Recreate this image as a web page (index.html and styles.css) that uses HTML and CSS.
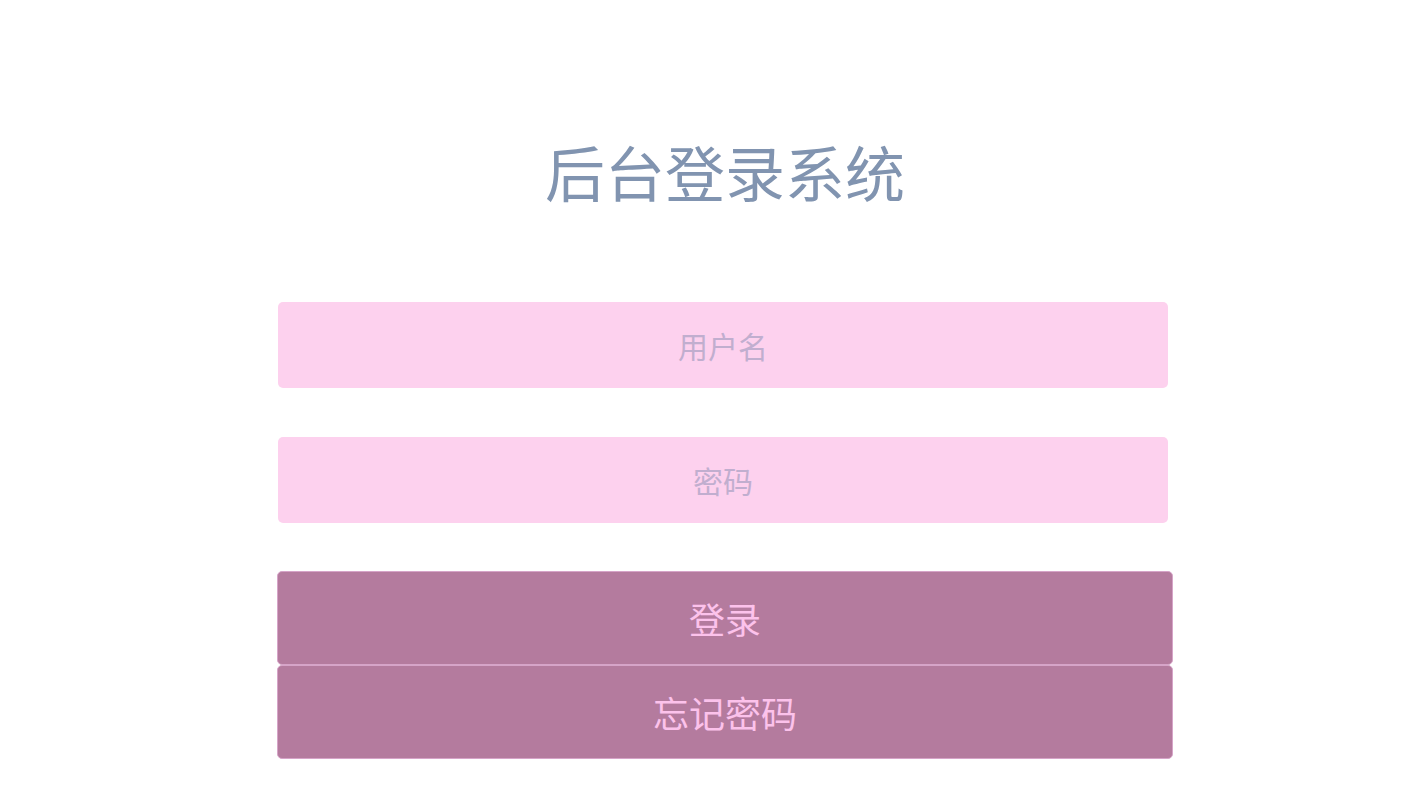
FILE: index.html
```html
<!DOCTYPE html>
<html lang="zh-CN">
<head>
<meta charset="utf-8">
<title>后台登录系统</title>
<link rel="stylesheet" href="styles.css">
</head>
<body>
<div class="login">
  <h1 class="title">后台登录系统</h1>
  <form class="form">
    <input class="field" type="text" placeholder="用户名">
    <input class="field" type="password" placeholder="密码">
    <div class="actions">
      <button class="btn" type="button">登录</button>
      <button class="btn" type="button">忘记密码</button>
    </div>
  </form>
</div>
</body>
</html>
```
FILE: styles.css
```css
html, body {
  margin: 0;
  padding: 0;
  background: #ffffff;
}
body {
  font-family: "Noto Sans CJK SC", "Liberation Sans", sans-serif;
}
.login {
  width: 896px;
  margin-left: 277px;
  padding-top: 131px;
}
.title {
  margin: 0;
  font-size: 60px;
  font-weight: 400;
  line-height: 80px;
  text-align: center;
  color: #8194b0;
}
.form {
  margin-top: 91px;
  display: flex;
  flex-direction: column;
}
.field {
  box-sizing: border-box;
  width: 890px;
  height: 86px;
  margin: 0 0 49px 1px;
  border: none;
  border-radius: 5px;
  background: #fdd1ee;
  font-family: inherit;
  font-size: 30px;
  text-align: center;
  color: #8a7a9a;
  outline: none;
}
.field::placeholder {
  color: #c1aecf;
}
.actions {
  margin-top: -1px;
  display: flex;
  flex-direction: column;
}
.btn {
  box-sizing: border-box;
  width: 896px;
  height: 94px;
  margin: 0;
  border: 1px solid #d6a4c8;
  border-radius: 5px;
  background: #b47b9e;
  font-family: inherit;
  font-size: 36px;
  color: #fcc2eb;
  cursor: pointer;
  padding: 0;
}
```
